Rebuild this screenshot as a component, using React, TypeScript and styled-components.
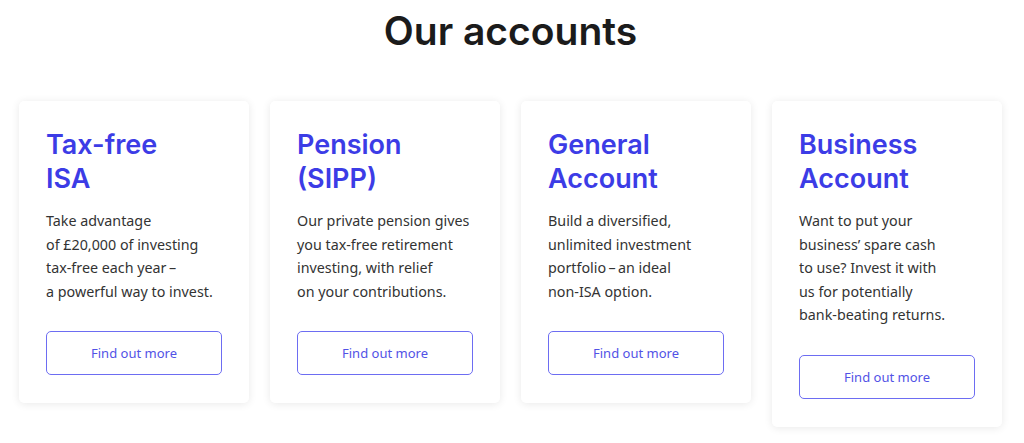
import React from "react";
import styled, { createGlobalStyle } from "styled-components";

const GlobalStyle = createGlobalStyle`
  * {
    box-sizing: border-box;
  }
  body {
    margin: 0;
    background: #ffffff;
    font-family: "Noto Sans", "Open Sans", sans-serif;
  }
`;

const Section = styled.section`
  display: flex;
  flex-direction: column;
  align-items: center;
  padding: 6px 3px 20px 0;
`;

const Heading = styled.h1`
  margin: 0;
  font-family: Inter, "Noto Sans", sans-serif;
  font-weight: 600;
  font-size: 39px;
  line-height: 50px;
  letter-spacing: 0;
  color: #1b1b1b;
`;

const CardRow = styled.ul`
  display: flex;
  align-items: flex-start;
  gap: 21px;
  margin: 45px 0 0;
  padding: 0;
  list-style: none;
`;

const Card = styled.li`
  display: flex;
  flex-direction: column;
  align-items: flex-start;
  width: 230px;
  padding: 27px 27px 28px;
  background: #ffffff;
  border-radius: 5px;
  box-shadow: 0 1px 8px rgba(0, 0, 0, 0.09);
`;

const CardTitle = styled.h2`
  margin: 0;
  font-family: Inter, "Noto Sans", sans-serif;
  font-weight: 600;
  font-size: 27px;
  line-height: 34px;
  color: #3c3ce6;
`;

const CardText = styled.p`
  margin: 13px 0 0;
  font-size: 14.3px;
  line-height: 23.5px;
  color: #333333;
`;

const FindButton = styled.a`
  display: flex;
  align-items: center;
  justify-content: center;
  width: 176px;
  height: 44px;
  margin-top: 28px;
  border: 1px solid #6d6df2;
  border-radius: 5px;
  font-size: 13px;
  color: #5252e6;
  text-decoration: none;
  cursor: pointer;
`;

interface Account {
  title: string[];
  lines: string[];
}

const accounts: Account[] = [
  {
    title: ["Tax-free", "ISA"],
    lines: [
      "Take advantage",
      "of £20,000 of investing",
      "tax-free each year\u2009\u2013",
      "a powerful way to invest."
    ]
  },
  {
    title: ["Pension", "(SIPP)"],
    lines: [
      "Our private pension gives",
      "you tax-free retirement",
      "investing, with relief",
      "on your contributions."
    ]
  },
  {
    title: ["General", "Account"],
    lines: [
      "Build a diversified,",
      "unlimited investment",
      "portfolio\u2009\u2013\u2009an ideal",
      "non-ISA option."
    ]
  },
  {
    title: ["Business", "Account"],
    lines: [
      "Want to put your",
      "business\u2019 spare cash",
      "to use? Invest it with",
      "us for potentially",
      "bank-beating returns."
    ]
  }
];

const App = () => {
  return (
    <>
      <GlobalStyle />
      <Section>
        <Heading>Our accounts</Heading>
        <CardRow>
          {accounts.map((account) => (
            <Card key={account.title.join(" ")}>
              <CardTitle>
                {account.title[0]}
                <br />
                {account.title[1]}
              </CardTitle>
              <CardText>
                {account.lines.map((line, i) => (
                  <React.Fragment key={i}>
                    {line}
                    {i < account.lines.length - 1 && <br />}
                  </React.Fragment>
                ))}
              </CardText>
              <FindButton>Find out more</FindButton>
            </Card>
          ))}
        </CardRow>
      </Section>
    </>
  );
};

export default App;
